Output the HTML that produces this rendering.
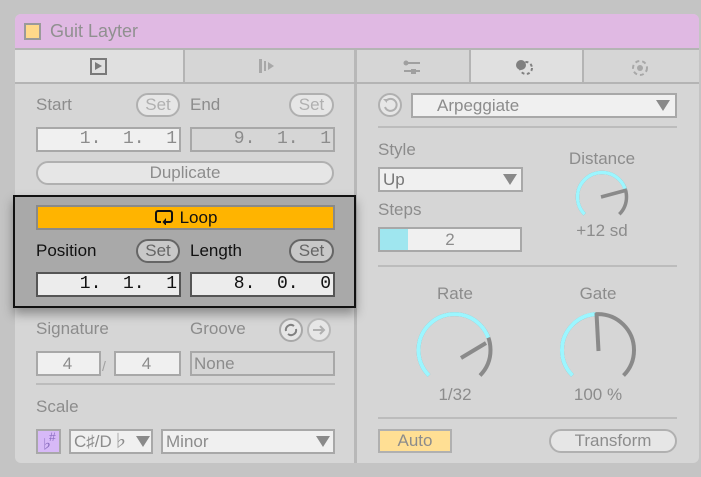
<!DOCTYPE html>
<html><head><meta charset="utf-8"><style>
*{box-sizing:border-box;margin:0;padding:0}
body{width:701px;height:477px;background:#c4c4c4;position:relative;overflow:hidden;font-family:"Liberation Sans","Noto Sans CJK JP",sans-serif;font-size:17px;color:#8c8c8c}
.a{position:absolute}
.lbl{position:absolute;line-height:20px}
.fld{position:absolute;border:2px solid #a8a8a8;background:#f0f0f0;height:25px;font-family:"Liberation Mono",monospace;font-size:18px;line-height:21px;text-align:right;padding-right:2px;white-space:pre}
.pill{position:absolute;border:2px solid #b0b0b0;border-radius:12px;background:#e6e6e6;text-align:center;line-height:20px;height:24px}
.hr{position:absolute;height:2px;background:#bcbcbc}
.dd{position:absolute;border:2px solid #a8a8a8;background:#f0f0f0;height:25px;line-height:21px;padding-left:3px}
.tri{position:absolute;width:0;height:0;border-left:7px solid transparent;border-right:7px solid transparent;border-top:11px solid #8a8a8a}
</style></head><body>
<div class="a" style="left:15px;top:14px;width:684px;height:449px;background:#d6d6d6;border-radius:6px;overflow:hidden">
  <div class="a" style="left:0;top:0;width:684px;height:34px;background:#e0b9e3"></div>
  <div class="a" style="left:9px;top:9px;width:17px;height:17px;background:#ffd98a;border:2px solid #9a9a9a"></div>
  <div class="lbl" style="left:35px;top:7px;font-size:18px;color:#909090">Guit Layter</div>
  <div class="a" style="left:0;top:34px;width:684px;height:2px;background:#b4b4b4"></div>
  <div class="a" style="left:0;top:36px;width:168px;height:32px;background:#e0e0e0"></div>
  <div class="a" style="left:168px;top:36px;width:2px;height:32px;background:#b4b4b4"></div>
  <div class="a" style="left:339px;top:36px;width:3px;height:413px;background:#b8b8b8"></div>
  <div class="a" style="left:454px;top:36px;width:2px;height:32px;background:#b4b4b4"></div>
  <div class="a" style="left:456px;top:36px;width:112px;height:32px;background:#e0e0e0"></div>
  <div class="a" style="left:567px;top:36px;width:2px;height:32px;background:#b4b4b4"></div>
  <div class="a" style="left:0;top:68px;width:684px;height:2px;background:#b4b4b4"></div>
  <div class="a" style="left:75px;top:44px;width:17px;height:17px;border:2px solid #7a7a7a"></div>
  <div class="a" style="left:80px;top:48px;width:0;height:0;border-top:4.5px solid transparent;border-bottom:4.5px solid transparent;border-left:7px solid #7a7a7a"></div>
  <div class="a" style="left:244px;top:45px;width:3px;height:14px;background:#a8a8a8"></div>
  <div class="a" style="left:249px;top:47px;width:2px;height:10px;background:#a8a8a8"></div>
  <div class="a" style="left:253px;top:48px;width:0;height:0;border-top:4px solid transparent;border-bottom:4px solid transparent;border-left:6px solid #a8a8a8"></div>
  <svg class="a" style="left:385px;top:42px" width="24" height="24"><g stroke="#a0a0a0" stroke-width="2"><line x1="4" y1="7" x2="20" y2="7"/><line x1="4" y1="15" x2="20" y2="15"/></g><circle cx="6" cy="7" r="2.5" fill="#a0a0a0"/><rect x="11" y="13" width="5" height="5" fill="#a0a0a0"/></svg>
  <svg class="a" style="left:497px;top:41px" width="26" height="26"><circle cx="9" cy="10" r="5" fill="#808080"/><circle cx="14" cy="13" r="6" fill="none" stroke="#808080" stroke-width="2" stroke-dasharray="3 2.5"/></svg>
  <svg class="a" style="left:612px;top:41px" width="26" height="26"><circle cx="13" cy="13" r="7" fill="none" stroke="#a8a8a8" stroke-width="2" stroke-dasharray="4 3"/><circle cx="13" cy="13" r="3" fill="#a8a8a8"/></svg>
</div>
<div class="lbl" style="left:36px;top:95px">Start</div>
<div class="pill" style="left:136px;top:93px;width:44px;color:#b0b0b0">Set</div>
<div class="lbl" style="left:190px;top:95px">End</div>
<div class="pill" style="left:289px;top:93px;width:45px;color:#b0b0b0">Set</div>
<div class="fld" style="left:36px;top:127px;width:145px">1.  1.  1</div>
<div class="fld" style="left:190px;top:127px;width:145px;background:#d6d6d6">9.  1.  1</div>
<div class="pill" style="left:36px;top:161px;width:298px;color:#8c8c8c">Duplicate</div>

<div class="a" style="left:13px;top:195px;width:343px;height:113px;background:#a9a9a9;border:2px solid #111;box-shadow:0 6px 10px rgba(0,0,0,.35)"></div>
<div class="a" style="left:36px;top:205px;width:299px;height:25px;background:#ffb400;border:2px solid #8a8a8a;text-align:center;line-height:21px;color:#111">
 <svg width="20" height="16" style="vertical-align:-2px;margin-right:6px"><path d="M7 13H4a2 2 0 0 1-2-2V4a2 2 0 0 1 2-2h12a2 2 0 0 1 2 2v7a2 2 0 0 1-2 2h-5" fill="none" stroke="#111" stroke-width="2"/><path d="M12 9l-3.5 4 3.5 4z" fill="#111"/></svg>Loop</div>
<div class="lbl" style="left:36px;top:241px;color:#111">Position</div>
<div class="pill" style="left:136px;top:239px;width:44px;background:#c8c8c8;border-color:#666;color:#666">Set</div>
<div class="lbl" style="left:190px;top:241px;color:#111">Length</div>
<div class="pill" style="left:289px;top:239px;width:45px;background:#c8c8c8;border-color:#666;color:#666">Set</div>
<div class="fld" style="left:36px;top:272px;width:145px;border-color:#555;background:#ececec;color:#111">1.  1.  1</div>
<div class="fld" style="left:190px;top:272px;width:145px;border-color:#555;background:#ececec;color:#111">8.  0.  0</div>

<div class="lbl" style="left:36px;top:319px">Signature</div>
<div class="lbl" style="left:190px;top:319px">Groove</div>
<svg class="a" style="left:279px;top:317px" width="54" height="26"><circle cx="12" cy="13" r="11" fill="#e6e6e6" stroke="#a8a8a8" stroke-width="2"/><path d="M7 14a5 5 0 0 1 8-5M17 12a5 5 0 0 1-8 5" fill="none" stroke="#808080" stroke-width="2"/><circle cx="40" cy="13" r="11" fill="#e6e6e6" stroke="#b8b8b8" stroke-width="2"/><path d="M34 13h11M41 9l4 4-4 4" fill="none" stroke="#b0b0b0" stroke-width="2"/></svg>
<div class="fld" style="left:36px;top:351px;width:65px;text-align:center;font-family:'Liberation Sans',sans-serif;font-size:17px">4</div>
<div class="lbl" style="left:102px;top:356px;font-size:14px;color:#a0a0a0">/</div>
<div class="fld" style="left:114px;top:351px;width:67px;text-align:center;font-family:'Liberation Sans',sans-serif;font-size:17px">4</div>
<div class="fld" style="left:190px;top:351px;width:145px;background:#d6d6d6;text-align:left;font-family:'Liberation Sans',sans-serif;font-size:17px;padding-left:2px">None</div>
<div class="hr" style="left:36px;top:383px;width:299px"></div>
<div class="lbl" style="left:36px;top:397px">Scale</div>
<div class="a" style="left:36px;top:429px;width:25px;height:25px;background:#d7b9f7;border:2px solid #a8a8a8;color:#8a6cc0;font-size:13px;line-height:12px"><span style="position:absolute;left:2px;top:8px">♭</span><span style="position:absolute;left:11px;top:0px;font-size:12px">#</span></div>
<div class="dd" style="left:69px;top:429px;width:84px;color:#8c8c8c">C♯/D♭</div>
<div class="tri" style="left:136px;top:436px"></div>
<div class="dd" style="left:161px;top:429px;width:174px">Minor</div>
<div class="tri" style="left:316px;top:436px"></div>

<svg class="a" style="left:377px;top:92px" width="26" height="26"><circle cx="13" cy="13" r="11" fill="#e6e6e6" stroke="#b0b0b0" stroke-width="2"/><path d="M9 9a6 6 0 1 1-1 6" fill="none" stroke="#b0b0b0" stroke-width="2"/><path d="M6 7l4 0 0 4z" fill="#b0b0b0"/></svg>
<div class="dd" style="left:411px;top:93px;width:266px;padding-left:24px">Arpeggiate</div>
<div class="tri" style="left:656px;top:100px"></div>
<div class="hr" style="left:378px;top:126px;width:299px"></div>
<div class="lbl" style="left:378px;top:140px">Style</div>
<div class="dd" style="left:378px;top:167px;width:145px;color:#777">Up</div>
<div class="tri" style="left:503px;top:174px"></div>
<div class="lbl" style="left:378px;top:200px">Steps</div>
<div class="a" style="left:378px;top:227px;width:144px;height:25px;border:2px solid #a8a8a8;background:#f0f0f0;text-align:center;line-height:21px;font-size:17px"><div class="a" style="left:0;top:0;width:28px;height:21px;background:#9fe6ef"></div><span style="position:relative">2</span></div>
<div class="lbl" style="left:560px;top:149px;width:84px;text-align:center">Distance</div>
<div class="lbl" style="left:560px;top:221px;width:84px;text-align:center">+12 sd</div>
<div class="hr" style="left:378px;top:265px;width:299px"></div>
<div class="lbl" style="left:415px;top:284px;width:80px;text-align:center">Rate</div>
<div class="lbl" style="left:415px;top:385px;width:80px;text-align:center">1/32</div>
<div class="lbl" style="left:558px;top:284px;width:80px;text-align:center">Gate</div>
<div class="lbl" style="left:558px;top:385px;width:80px;text-align:center">100 %</div>
<svg class="a" style="left:0;top:0" width="701" height="477">
 <g fill="none" stroke-width="3.5">
  <path d="M584.7 214.3A24.5 24.5 0 1 1 619.3 214.3" stroke="#8a8a8a"/>
  <path d="M584.7 214.3A24.5 24.5 0 1 1 619.3 214.3" stroke="#9cf6ff" pathLength="270" stroke-dasharray="210 1000"/>
  <line x1="601" y1="197" x2="627" y2="190" stroke="#8a8a8a"/>
  <path d="M429 375.5A36 36 0 1 1 480 375.5" stroke="#8a8a8a" stroke-width="4"/>
  <path d="M429 375.5A36 36 0 1 1 480 375.5" stroke="#9cf6ff" stroke-width="4" pathLength="270" stroke-dasharray="205 1000"/>
  <line x1="461" y1="358" x2="486" y2="343" stroke="#8a8a8a" stroke-width="4"/>
  <path d="M572.5 375.5A36 36 0 1 1 623.5 375.5" stroke="#8a8a8a" stroke-width="4"/>
  <path d="M572.5 375.5A36 36 0 1 1 623.5 375.5" stroke="#9cf6ff" stroke-width="4" pathLength="270" stroke-dasharray="131 1000"/>
  <line x1="598.5" y1="351" x2="596.5" y2="313" stroke="#8a8a8a" stroke-width="4"/>
 </g>
</svg>
<div class="hr" style="left:378px;top:417px;width:299px"></div>
<div class="a" style="left:378px;top:429px;width:74px;height:24px;background:#ffdf94;border:2px solid #b0b0b0;text-align:center;line-height:20px">Auto</div>
<div class="pill" style="left:549px;top:429px;width:128px;color:#8c8c8c">Transform</div>
</body></html>
